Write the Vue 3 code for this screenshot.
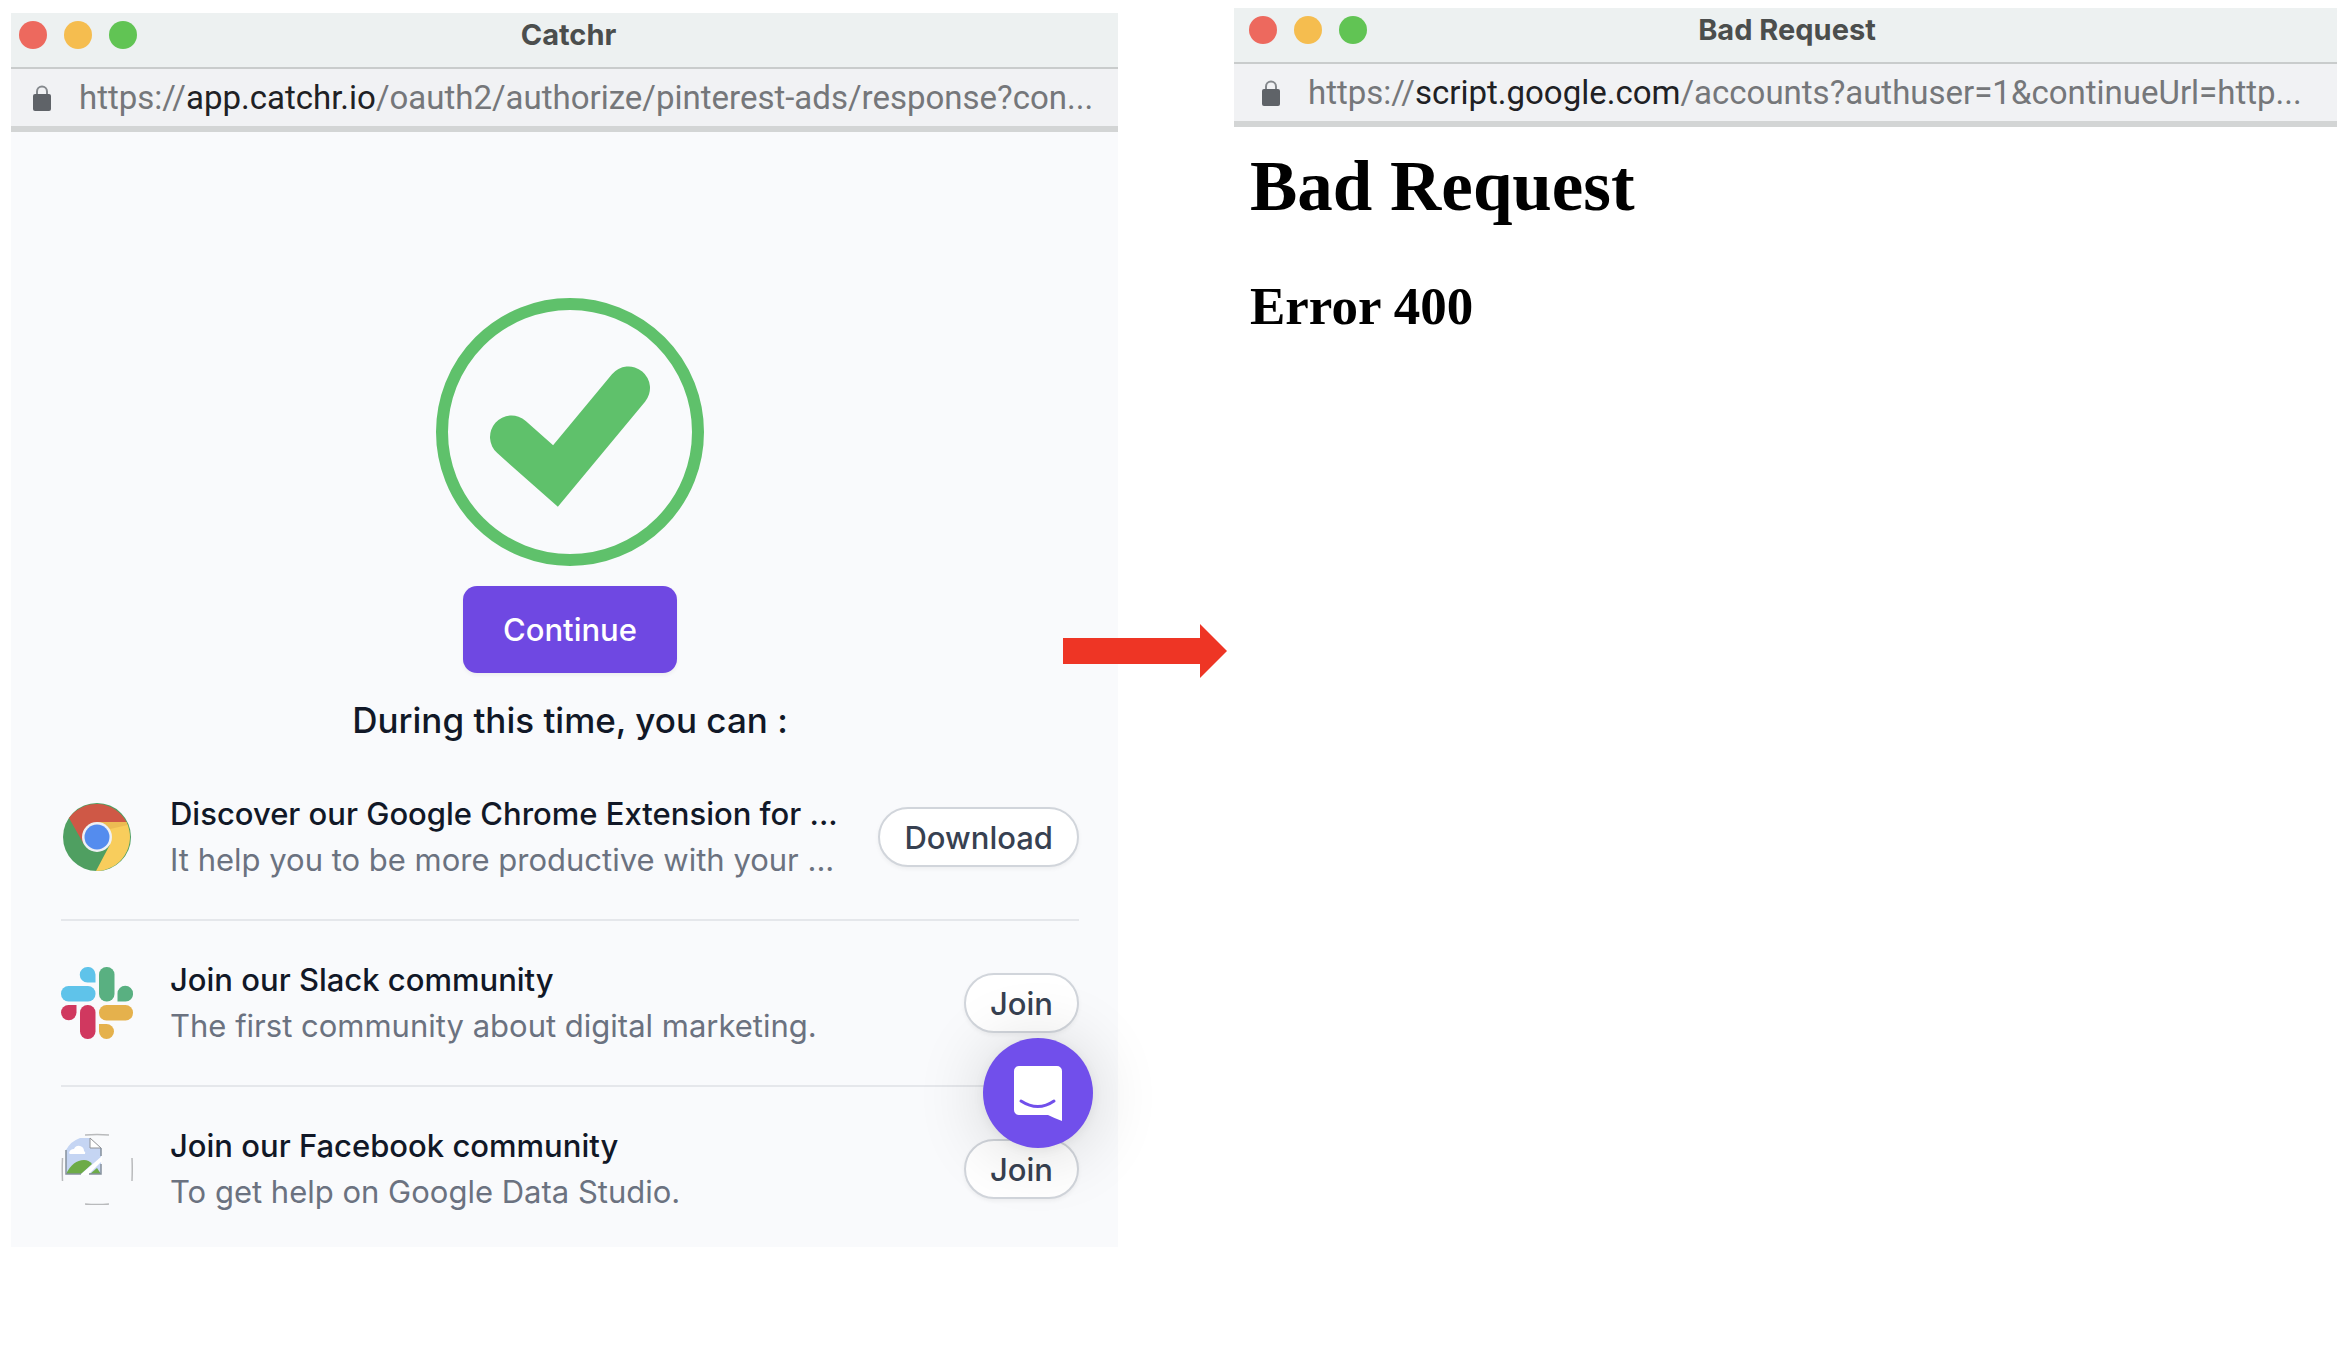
<template>
  <main class="board">
    <section class="window window-left">
      <header class="titlebar">
        <div class="lights">
          <button v-for="c in lights" :key="c" type="button" class="light" :class="c" :aria-label="c"></button>
        </div>
        <span class="window-title">Catchr</span>
      </header>
      <div class="urlbar">
        <svg class="lock" viewBox="0 0 18 26" aria-hidden="true">
          <path d="M4 11V6.500a5 5 0 0 1 10 0V11" fill="none" stroke="#85898d" stroke-width="2" />
          <rect x="0" y="9" width="18" height="17" rx="2" fill="#5f6368" />
        </svg>
        <span class="url">https://<b>app.catchr.io</b>/oauth2/authorize/pinterest-ads/response?con...</span>
      </div>

      <div class="page">
        <svg class="success" viewBox="0 0 268 268" aria-hidden="true">
          <circle cx="134" cy="134" r="128" fill="none" stroke="#5fc16b" stroke-width="12" />
          <path d="M75.500 139L119.500 178L192.500 90" fill="none" stroke="#5fc16b" stroke-width="43" stroke-linecap="round" />
        </svg>
        <button type="button" class="continue">Continue</button>
        <h2 class="subtitle">During this time, you can :</h2>

        <ul class="list">
          <li v-for="item in items" :key="item.icon" class="row">
            <svg v-if="item.icon === 'chrome'" class="icon" viewBox="0 0 72 72" aria-hidden="true">
              <circle cx="36" cy="36" r="34" fill="#4f9f61" />
              <path d="M36 21H65.500A34 34 0 0 1 35 70L49 43.500Z" fill="#f8cd5c" />
              <path d="M8 17A34 34 0 0 1 65.500 21H36L23 43.500Z" fill="#cf5846" />
              <path d="M36 21H65.500L66.500 24L49 28Z" fill="#e5b04c" opacity="0.600" />
              <circle cx="36" cy="36" r="15" fill="#eef0f4" />
              <circle cx="36" cy="36" r="12.500" fill="#548cee" />
            </svg>
            <svg v-else-if="item.icon === 'slack'" class="icon" viewBox="0 0 72 72" aria-hidden="true">
              <path d="M26.500 0a7.500 7.500 0 0 0 0 15.500H34.500V7.500A7.500 7.500 0 0 0 26.500 0Z" fill="#5fc3ea" />
              <rect x="0" y="19" width="34.500" height="15.500" rx="7.500" fill="#5fc3ea" />
              <rect x="38" y="0" width="15.500" height="34.500" rx="7.500" fill="#59b081" />
              <path d="M72 26.500a7.500 7.500 0 0 0-15.500 0V34.500H64.500A7.500 7.500 0 0 0 72 26.500Z" fill="#59b081" />
              <path d="M0 45.500a7.500 7.500 0 0 0 15.500 0V38H7.500A7.500 7.500 0 0 0 0 45.500Z" fill="#d0385f" />
              <rect x="19" y="38" width="15.500" height="34" rx="7.500" fill="#d0385f" />
              <rect x="38" y="38" width="34" height="15.500" rx="7.500" fill="#e5b14c" />
              <path d="M45.500 72a7.500 7.500 0 0 0 0-15H38V64.500A7.500 7.500 0 0 0 45.500 72Z" fill="#e5b14c" />
            </svg>
            <svg v-else class="icon" viewBox="0 0 72 72" aria-hidden="true">
              <g fill="none" stroke="#b9babc" stroke-width="1.500">
                <path d="M24 2Q36 1 48 2M24 71Q36 72 48 71M1.500 25Q1 36 1.500 48M71 25Q71.500 36 71 48" />
              </g>
              <path d="M5 41V17Q10 8 19 5H29V15H40V41Z" fill="#c5d5f3" />
              <path d="M8 20q1-4 5-4q2-4 6-3q4 1 4 5q2 1 1 3H9Z" fill="#fff" />
              <path d="M5 41Q12 27 23 27Q28 27 31 31L20 41Z" fill="#6dab47" />
              <path d="M29 41L36 35L40 41Z" fill="#6dab47" />
              <path d="M19 42L41 23V28L27 42Z" fill="#fff" />
              <path d="M29 5L40 15H29Z" fill="#fff" stroke="#909296" />
              <path d="M5 17V41H20M28 41H40V31M40 15V23" fill="none" stroke="#85909c" stroke-width="1.500" />
            </svg>
            <div class="row-text">
              <h3>{{ item.title }}</h3>
              <p>{{ item.text }}</p>
            </div>
            <button type="button" class="pill">{{ item.action }}</button>
          </li>
        </ul>
      </div>

      <button type="button" class="chat" aria-label="Chat">
        <svg viewBox="0 0 48 55" aria-hidden="true">
          <path d="M5 0H43A5 5 0 0 1 48 5V55Q40 52 34 49H5A5 5 0 0 1 0 44V5A5 5 0 0 1 5 0Z" fill="#fff" />
          <path d="M7 35Q24 46 40 35" fill="none" stroke="#714feb" stroke-width="3" stroke-linecap="round" />
        </svg>
      </button>
      <svg class="arrow" viewBox="0 0 164 54" aria-hidden="true">
        <path d="M0 14H137V0L164 27L137 54V40H0Z" fill="#ee3525" />
      </svg>
    </section>

    <section class="window window-right">
      <header class="titlebar">
        <div class="lights">
          <button v-for="c in lights" :key="c" type="button" class="light" :class="c" :aria-label="c"></button>
        </div>
        <span class="window-title">Bad Request</span>
      </header>
      <div class="urlbar">
        <svg class="lock" viewBox="0 0 18 26" aria-hidden="true">
          <path d="M4 11V6.500a5 5 0 0 1 10 0V11" fill="none" stroke="#85898d" stroke-width="2" />
          <rect x="0" y="9" width="18" height="17" rx="2" fill="#5f6368" />
        </svg>
        <span class="url">https://<b>script.google.com</b>/accounts?authuser=1&amp;continueUrl=http...</span>
      </div>
      <div class="error">
        <h1>Bad Request</h1>
        <h2>Error 400</h2>
      </div>
    </section>
  </main>
</template>

<script setup>
const lights = ['close', 'minimize', 'zoom']

const items = [
  {
    icon: 'chrome',
    title: 'Discover our Google Chrome Extension for ...',
    text: 'It help you to be more productive with your ...',
    action: 'Download'
  },
  {
    icon: 'slack',
    title: 'Join our Slack community',
    text: 'The first community about digital marketing.',
    action: 'Join'
  },
  {
    icon: 'facebook',
    title: 'Join our Facebook community',
    text: 'To get help on Google Data Studio.',
    action: 'Join'
  }
]
</script>

<style>
body {
  background: #fff;
}
</style>

<style scoped>
.board {
  display: grid;
  grid-template-columns: 1107fr 1103fr;
  gap: 116px;
  align-items: start;
  padding: 8px 7px 0 11px;
  font-family: Inter, "Liberation Sans", sans-serif;
}
button {
  font-family: inherit;
  cursor: pointer;
}
h1, h2, h3, p, ul {
  margin: 0;
  padding: 0;
}
.window {
  position: relative;
  min-width: 0;
}
.window-left {
  margin-top: 5px;
  background: #f9fafc;
}
.titlebar {
  box-sizing: border-box;
  display: grid;
  grid-template-columns: 1fr auto 1fr;
  align-items: center;
  height: 56px;
  padding: 0 0 10px 8px;
  background: #edf1f1;
  border-bottom: 2px solid #c9cccc;
}
.window-right .titlebar {
  padding: 0 12px 10px 15px;
}
.lights {
  display: flex;
  gap: 17px;
}
.light {
  width: 28px;
  height: 28px;
  padding: 0;
  border: 0;
  border-radius: 50%;
}
.close {
  background: #ed695e;
}
.minimize {
  background: #f5bd4f;
}
.zoom {
  background: #61c454;
}
.window-title {
  font-size: 29px;
  font-weight: 700;
  line-height: 36px;
  color: #4b4e4d;
}
.urlbar {
  box-sizing: border-box;
  display: flex;
  align-items: center;
  gap: 28px;
  height: 63px;
  padding: 0 8px 0 22px;
  background: #f1f2f4;
  border-bottom: 6px solid #d3d5d5;
}
.window-right .urlbar {
  padding-left: 28px;
}
.lock {
  flex: none;
  width: 18px;
  height: 26px;
}
.url {
  overflow: hidden;
  font-family: Roboto, "Liberation Sans", sans-serif;
  font-size: 33px;
  line-height: 44px;
  white-space: nowrap;
  color: #75777a;
}
.url b {
  font-weight: 400;
  color: #202124;
}
.page {
  display: flex;
  flex-direction: column;
  align-items: center;
  padding: 166px 39px 0 50px;
}
.success {
  width: 268px;
  height: 268px;
}
.continue {
  height: 87px;
  margin-top: 20px;
  padding: 0 40px;
  border: 0;
  border-radius: 14px;
  background: #6f48e2;
  color: #fff;
  font-size: 31px;
  font-weight: 500;
  box-shadow: 0 2px 4px rgba(0, 0, 0, 0.06);
}
.subtitle {
  margin-top: 24px;
  font-size: 35px;
  font-weight: 500;
  line-height: 46px;
  color: #111827;
}
.list {
  align-self: stretch;
  margin-top: 12px;
  list-style: none;
}
.row {
  display: flex;
  align-items: center;
  padding: 36px 0;
  border-bottom: 2px solid #e5e7eb;
}
.row:last-child {
  padding-bottom: 32px;
  border-bottom: 0;
}
.icon {
  flex: none;
  width: 72px;
  height: 72px;
}
.row-text {
  flex: 1;
  min-width: 0;
  margin-left: 37px;
  white-space: nowrap;
}
.row-text h3,
.row-text p {
  font-size: 31px;
  line-height: 46px;
}
.row-text h3 {
  font-weight: 500;
  color: #111827;
}
.row-text p {
  color: #6b7280;
}
.pill {
  height: 60px;
  padding: 0 24px;
  border: 2px solid #d1d5db;
  border-radius: 30px;
  background: #fff;
  color: #374151;
  font-size: 31px;
  font-weight: 500;
  box-shadow: 0 2px 4px rgba(0, 0, 0, 0.05);
}
.chat {
  position: absolute;
  right: 25px;
  bottom: 99px;
  display: flex;
  align-items: center;
  justify-content: center;
  width: 110px;
  height: 110px;
  padding: 0;
  border: 0;
  border-radius: 50%;
  background: #714feb;
  box-shadow: 0 2px 12px rgba(0, 0, 0, 0.06), 0 4px 70px rgba(0, 0, 0, 0.16);
}
.chat svg {
  width: 48px;
  height: 55px;
}
.arrow {
  position: absolute;
  top: 611px;
  right: -109px;
  width: 164px;
  height: 54px;
}
.error {
  padding: 19px 16px;
  font-family: "Liberation Serif", "Times New Roman", serif;
  color: #000;
}
.error h1 {
  font-size: 71px;
  line-height: 80px;
}
.error h2 {
  margin-top: 50px;
  font-size: 53px;
  line-height: 60px;
}
</style>
